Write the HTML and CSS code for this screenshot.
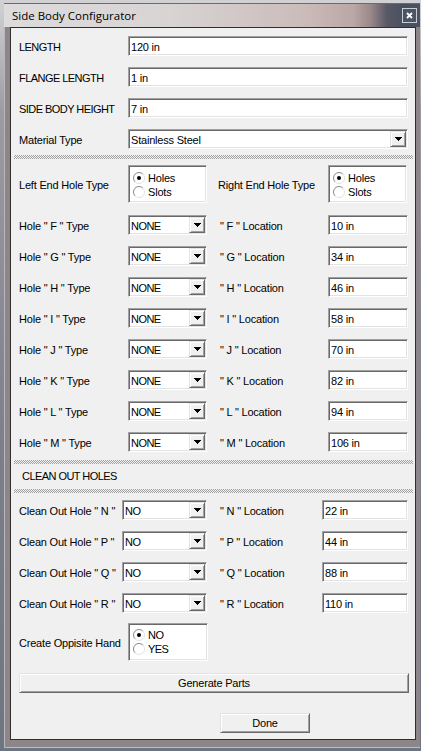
FILE: index.html
```html
<!DOCTYPE html>
<html>
<head>
<meta charset="utf-8">
<link rel="stylesheet" href="styles.css">
</head>
<body>
<div class="window">
  <div class="titlebar">
    <span class="title">Side Body Configurator</span>
    <span class="close"><svg width="7" height="7" viewBox="0 0 7 7"><path d="M1 1L6 6M6 1L1 6" stroke="#fff" stroke-width="1.8"/></svg></span>
  </div>
  <div class="client">
    <div class="grid top">
      <span class="lbl caps">LENGTH</span><div class="field">120 in</div>
      <span class="lbl caps">FLANGE LENGTH</span><div class="field">1 in</div>
      <span class="lbl caps">SIDE BODY HEIGHT</span><div class="field">7 in</div>
      <span class="lbl">Material Type</span>
      <div class="combo"><span class="val">Stainless Steel</span><span class="drop"><svg width="7" height="4" viewBox="0 0 7 4"><path d="M0 0H7V1H6V2H5V3H4V4H3V3H2V2H1V1H0Z"/></svg></span></div>
    </div>

    <div class="sep"></div>

    <div class="radios">
      <span class="lbl">Left End Hole Type</span>
      <div class="group">
        <div class="opt"><svg class="rd" width="12" height="12" viewBox="0 0 12 12"><circle cx="6" cy="6" r="5.5" fill="#fff"/><path d="M2.1 9.9A5.5 5.5 0 0 1 9.9 2.1" fill="none" stroke="#8a8a8a"/><path d="M9.9 2.1A5.5 5.5 0 0 1 2.1 9.9" fill="none" stroke="#e2e2e2"/><circle cx="6" cy="6" r="2" fill="#000"/></svg>Holes</div>
        <div class="opt"><svg class="rd" width="12" height="12" viewBox="0 0 12 12"><circle cx="6" cy="6" r="5.5" fill="#fff"/><path d="M2.1 9.9A5.5 5.5 0 0 1 9.9 2.1" fill="none" stroke="#8a8a8a"/><path d="M9.9 2.1A5.5 5.5 0 0 1 2.1 9.9" fill="none" stroke="#e2e2e2"/></svg>Slots</div>
      </div>
      <span class="lbl rl">Right End Hole Type</span>
      <div class="group">
        <div class="opt"><svg class="rd" width="12" height="12" viewBox="0 0 12 12"><circle cx="6" cy="6" r="5.5" fill="#fff"/><path d="M2.1 9.9A5.5 5.5 0 0 1 9.9 2.1" fill="none" stroke="#8a8a8a"/><path d="M9.9 2.1A5.5 5.5 0 0 1 2.1 9.9" fill="none" stroke="#e2e2e2"/><circle cx="6" cy="6" r="2" fill="#000"/></svg>Holes</div>
        <div class="opt"><svg class="rd" width="12" height="12" viewBox="0 0 12 12"><circle cx="6" cy="6" r="5.5" fill="#fff"/><path d="M2.1 9.9A5.5 5.5 0 0 1 9.9 2.1" fill="none" stroke="#8a8a8a"/><path d="M9.9 2.1A5.5 5.5 0 0 1 2.1 9.9" fill="none" stroke="#e2e2e2"/></svg>Slots</div>
      </div>
    </div>

    <div class="grid holes">
      <span class="lbl">Hole " F " Type</span>
      <div class="combo"><span class="val caps">NONE</span><span class="drop"><svg width="7" height="4" viewBox="0 0 7 4"><path d="M0 0H7V1H6V2H5V3H4V4H3V3H2V2H1V1H0Z"/></svg></span></div>
      <span class="lbl loc">" F " Location</span><div class="field">10 in</div>

      <span class="lbl">Hole " G " Type</span>
      <div class="combo"><span class="val caps">NONE</span><span class="drop"><svg width="7" height="4" viewBox="0 0 7 4"><path d="M0 0H7V1H6V2H5V3H4V4H3V3H2V2H1V1H0Z"/></svg></span></div>
      <span class="lbl loc">" G " Location</span><div class="field">34 in</div>

      <span class="lbl">Hole " H " Type</span>
      <div class="combo"><span class="val caps">NONE</span><span class="drop"><svg width="7" height="4" viewBox="0 0 7 4"><path d="M0 0H7V1H6V2H5V3H4V4H3V3H2V2H1V1H0Z"/></svg></span></div>
      <span class="lbl loc">" H " Location</span><div class="field">46 in</div>

      <span class="lbl">Hole " I " Type</span>
      <div class="combo"><span class="val caps">NONE</span><span class="drop"><svg width="7" height="4" viewBox="0 0 7 4"><path d="M0 0H7V1H6V2H5V3H4V4H3V3H2V2H1V1H0Z"/></svg></span></div>
      <span class="lbl loc">" I " Location</span><div class="field">58 in</div>

      <span class="lbl">Hole " J " Type</span>
      <div class="combo"><span class="val caps">NONE</span><span class="drop"><svg width="7" height="4" viewBox="0 0 7 4"><path d="M0 0H7V1H6V2H5V3H4V4H3V3H2V2H1V1H0Z"/></svg></span></div>
      <span class="lbl loc">" J " Location</span><div class="field">70 in</div>

      <span class="lbl">Hole " K " Type</span>
      <div class="combo"><span class="val caps">NONE</span><span class="drop"><svg width="7" height="4" viewBox="0 0 7 4"><path d="M0 0H7V1H6V2H5V3H4V4H3V3H2V2H1V1H0Z"/></svg></span></div>
      <span class="lbl loc">" K " Location</span><div class="field">82 in</div>

      <span class="lbl">Hole " L " Type</span>
      <div class="combo"><span class="val caps">NONE</span><span class="drop"><svg width="7" height="4" viewBox="0 0 7 4"><path d="M0 0H7V1H6V2H5V3H4V4H3V3H2V2H1V1H0Z"/></svg></span></div>
      <span class="lbl loc">" L " Location</span><div class="field">94 in</div>

      <span class="lbl">Hole " M " Type</span>
      <div class="combo"><span class="val caps">NONE</span><span class="drop"><svg width="7" height="4" viewBox="0 0 7 4"><path d="M0 0H7V1H6V2H5V3H4V4H3V3H2V2H1V1H0Z"/></svg></span></div>
      <span class="lbl loc">" M " Location</span><div class="field">106 in</div>
    </div>

    <div class="sep sep-lg"></div>
    <div class="heading caps">CLEAN OUT HOLES</div>
    <div class="sep"></div>

    <div class="grid clean">
      <span class="lbl">Clean Out Hole " N "</span>
      <div class="combo"><span class="val caps">NO</span><span class="drop"><svg width="7" height="4" viewBox="0 0 7 4"><path d="M0 0H7V1H6V2H5V3H4V4H3V3H2V2H1V1H0Z"/></svg></span></div>
      <span class="lbl loc">" N " Location</span><div class="field">22 in</div>

      <span class="lbl">Clean Out Hole " P "</span>
      <div class="combo"><span class="val caps">NO</span><span class="drop"><svg width="7" height="4" viewBox="0 0 7 4"><path d="M0 0H7V1H6V2H5V3H4V4H3V3H2V2H1V1H0Z"/></svg></span></div>
      <span class="lbl loc">" P " Location</span><div class="field">44 in</div>

      <span class="lbl">Clean Out Hole " Q "</span>
      <div class="combo"><span class="val caps">NO</span><span class="drop"><svg width="7" height="4" viewBox="0 0 7 4"><path d="M0 0H7V1H6V2H5V3H4V4H3V3H2V2H1V1H0Z"/></svg></span></div>
      <span class="lbl loc">" Q " Location</span><div class="field">88 in</div>

      <span class="lbl">Clean Out Hole " R "</span>
      <div class="combo"><span class="val caps">NO</span><span class="drop"><svg width="7" height="4" viewBox="0 0 7 4"><path d="M0 0H7V1H6V2H5V3H4V4H3V3H2V2H1V1H0Z"/></svg></span></div>
      <span class="lbl loc">" R " Location</span><div class="field">110 in</div>
    </div>

    <div class="opp">
      <span class="lbl">Create Oppisite Hand</span>
      <div class="group group-opp">
        <div class="opt"><svg class="rd" width="12" height="12" viewBox="0 0 12 12"><circle cx="6" cy="6" r="5.5" fill="#fff"/><path d="M2.1 9.9A5.5 5.5 0 0 1 9.9 2.1" fill="none" stroke="#8a8a8a"/><path d="M9.9 2.1A5.5 5.5 0 0 1 2.1 9.9" fill="none" stroke="#e2e2e2"/><circle cx="6" cy="6" r="2" fill="#000"/></svg><span class="caps">NO</span></div>
        <div class="opt"><svg class="rd" width="12" height="12" viewBox="0 0 12 12"><circle cx="6" cy="6" r="5.5" fill="#fff"/><path d="M2.1 9.9A5.5 5.5 0 0 1 9.9 2.1" fill="none" stroke="#8a8a8a"/><path d="M9.9 2.1A5.5 5.5 0 0 1 2.1 9.9" fill="none" stroke="#e2e2e2"/></svg><span class="caps">YES</span></div>
      </div>
    </div>

    <div class="btn generate">Generate Parts</div>
    <div class="btn done">Done</div>
  </div>
</div>
</body>
</html>
```

FILE: styles.css
```css
* { box-sizing: border-box; }

body {
  margin: 0;
  height: 751px;
  overflow: hidden;
  background: linear-gradient(180deg, #d2d2d4 0, #9a9ca3 15%, #7a7f8a 60%, #6e7582 100%);
  font-family: "Liberation Sans", Arial, sans-serif;
  font-size: 11px;
  letter-spacing: -0.2px;
  color: #000;
}

.window {
  margin: 3px 0 0 4px;
  width: 416px;
  background: #8c8688;
  border-top: 1px solid #6e6a6c;
  padding: 0 4px 8px 6px;
  box-shadow: inset 1px 0 0 #bdb5b7, inset 0 -1px 0 #c3bbbd;
}

.titlebar {
  height: 23px;
  margin: 0 -4px 0 -6px;
  display: flex;
  align-items: center;
  justify-content: space-between;
  padding: 0 3px 0 8px;
  background: linear-gradient(90deg, #dddbdc 0, #d8d4d4 40%, #cbbcba 72%, #bba7a5 84%, #9a8a8c 88%, #5b5866 92%, #46505f 96%, #4a5363 100%);
}

.title {
  font-family: "Open Sans", "Liberation Sans", sans-serif;
  font-size: 11.5px;
  letter-spacing: 0;
  color: #000;
}

.close {
  width: 15px;
  height: 15px;
  border: 1px solid #c9ccd4;
  background: #4d5365;
  display: flex;
  align-items: center;
  justify-content: center;
}

.client {
  border: 1px solid #2f2f2f;
  background: #f0f0f0;
  padding: 8px 0 6px 0;
}

.grid {
  display: grid;
  padding-left: 8px;
  row-gap: 11px;
  grid-auto-rows: 20px;
  align-items: center;
}

.top { grid-template-columns: 109px 280px; }
.holes { grid-template-columns: 109px 79px 121px 80px; margin-top: 12px; }
.clean { grid-template-columns: 103px 85px 115px 86px; margin-top: 7px; }

.lbl { white-space: nowrap; padding-top: 1px; }
.caps { letter-spacing: -0.55px; }
.loc { padding-left: 13px; }
.rl { padding-left: 11px; }

.field, .combo, .group {
  background: #fff;
  border: 1px solid;
  border-color: #a0a0a0 #ffffff #ffffff #a0a0a0;
  box-shadow: inset 1px 1px 0 #696969, inset -1px -1px 0 #e3e3e3;
}

.field {
  height: 20px;
  padding: 1px 2px 0;
  line-height: 18px;
  white-space: nowrap;
}

.combo {
  height: 20px;
  padding: 1px;
  display: flex;
}

.val {
  flex: 1;
  padding: 1px 0 0 1px;
  line-height: 16px;
  white-space: nowrap;
}

.drop, .btn {
  background: #f0f0f0;
  border: 1px solid;
  border-color: #e3e3e3 #696969 #696969 #e3e3e3;
  box-shadow: inset 1px 1px 0 #ffffff, inset -1px -1px 0 #a0a0a0;
  display: flex;
  align-items: center;
  justify-content: center;
}

.drop {
  width: 16px;
  height: 16px;
}

.sep {
  height: 4px;
  margin: 6px 2px 0 3px;
  background: repeating-conic-gradient(#a3a3a3 0 25%, #f0f0f0 0 50%) 0 0 / 2px 2px;
}

.sep-lg { margin-top: 8px; }

.heading {
  margin-top: 6px;
  line-height: 13px;
  padding-left: 11px;
}

.radios {
  display: grid;
  grid-template-columns: 109px 79px 121px 79px;
  padding-left: 8px;
  margin-top: 6px;
  align-items: center;
}

.group {
  height: 38px;
  padding: 5px 0 0 4px;
}

.group-opp { padding-top: 4px; }

.opt {
  display: flex;
  align-items: center;
  height: 14px;
  gap: 3px;
  white-space: nowrap;
}

.rd { flex: none; margin-top: -1px; }

.opp {
  display: grid;
  grid-template-columns: 109px 80px;
  padding-left: 8px;
  margin-top: 10px;
  align-items: center;
}

.btn { height: 20px; }

.generate {
  margin: 12px 0 0 8px;
  width: 390px;
}

.done {
  margin: 20px 0 0 209px;
  width: 90px;
}
```
